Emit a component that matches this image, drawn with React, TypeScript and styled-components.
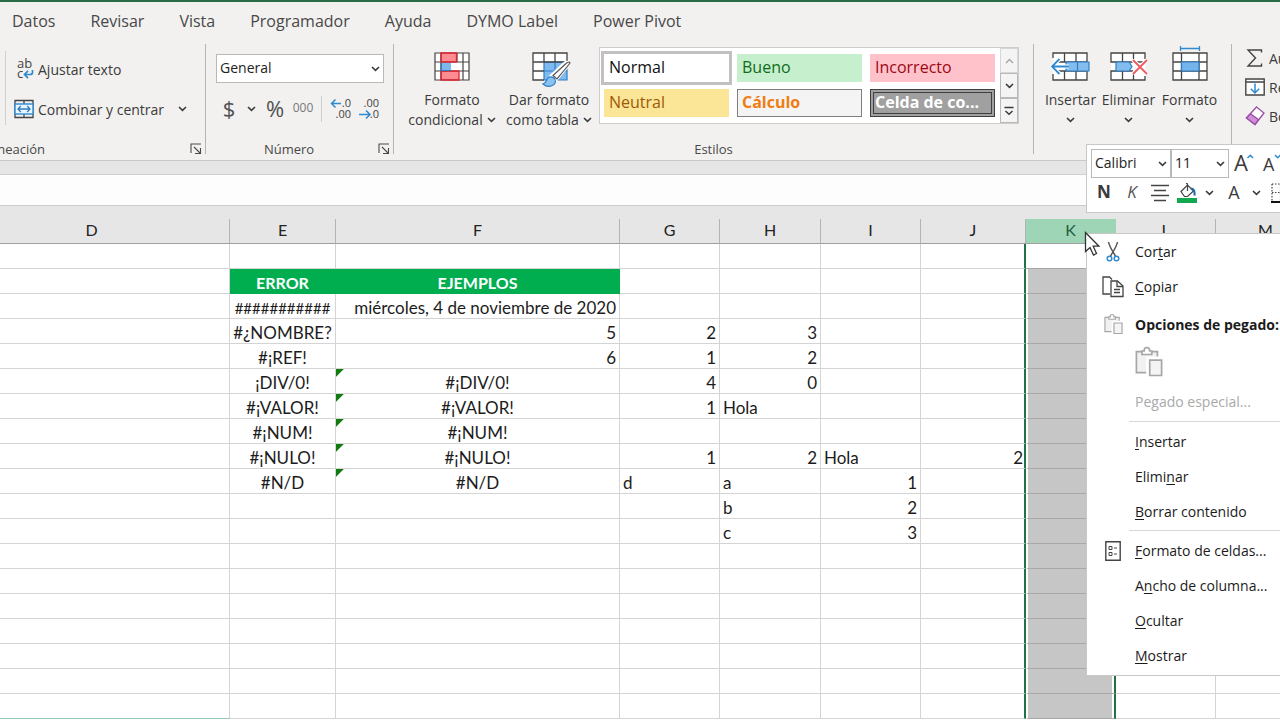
import React from "react";
import styled, { createGlobalStyle, css } from "styled-components";

const ui = `"Open Sans", "Noto Sans", sans-serif`;
const sheetFont = `Lato, "Noto Sans", sans-serif`;

const GlobalStyle = createGlobalStyle`
  *, *::before, *::after { box-sizing: border-box; }
  body { margin: 0; background: #fff; font-family: ${ui}; font-size: 14px; color: #3b3b3b; }
  button, select, input { font: inherit; color: inherit; }
  button { background: none; border: 0; padding: 0; }
`;

const Page = styled.div`
  position: relative;
  min-height: 100vh;
  overflow: hidden;
  background: #fff;
`;

const Tabs = styled.nav`
  display: flex;
  gap: 35px;
  height: 44px;
  padding: 0 0 4px 12px;
  border-top: 2px solid #2b6b45;
  background: #f2f1f0;
`;

const Tab = styled.a`
  line-height: 38px;
  font-size: 16px;
  color: #484848;
  text-decoration: none;
  white-space: nowrap;
`;

const Ribbon = styled.div`
  display: flex;
  height: 117px;
  padding-bottom: 6px;
  border-bottom: 1px solid #c9c9c9;
  background: #f2f1f0;
`;

const Group = styled.section<{ $width?: number }>`
  flex: ${(p) => (p.$width ? `0 0 ${p.$width}px` : "1 0 auto")};
  display: flex;
  flex-direction: column;
  height: 110px;
  border-right: ${(p) => (p.$width ? "1px solid #b5b5b5" : "0")};
`;

const GroupBody = styled.div<{ $pad?: string }>`
  display: flex;
  align-items: flex-start;
  height: 98px;
  padding: ${(p) => p.$pad ?? "0"};
`;

const Caption = styled.div<{ $launcher?: boolean }>`
  position: relative;
  display: flex;
  justify-content: center;
  height: 12px;
  padding-right: ${(p) => (p.$launcher ? 21 : 0)}px;
  font-size: 13px;
  line-height: 14px;
  color: #484848;
`;

const CutCaption = styled(Caption)`
  justify-content: flex-end;
  width: 45px;
`;

const Launcher = styled.button`
  position: absolute;
  right: 3px;
  top: 1px;
  height: 12px;
  line-height: 0;
`;

const CutRow = styled.div`
  position: relative;
`;

const Column = styled.div<{ $gap: number; $top?: number }>`
  display: flex;
  flex-direction: column;
  gap: ${(p) => p.$gap}px;
  padding-top: ${(p) => p.$top ?? 0}px;
`;

const Rule = styled.span<{ $height: number; $margin: string }>`
  width: 1px;
  height: ${(p) => p.$height}px;
  margin: ${(p) => p.$margin};
  background: #cfcfcf;
`;

const RowButton = styled.button<{ $gap?: number }>`
  display: flex;
  align-items: center;
  gap: ${(p) => p.$gap ?? 4}px;
  height: 28px;
  font-size: 14px;
  white-space: nowrap;
`;

const ChevronSpace = styled.span`
  display: flex;
  margin-left: 10px;
`;

const SelectBox = styled.label<{ $width: number; $height: number }>`
  position: relative;
  display: flex;
  align-items: center;
  width: ${(p) => p.$width}px;
  height: ${(p) => p.$height}px;
  border: 1px solid #b9b9b9;
  background: #fff;

  select {
    width: 100%;
    height: 100%;
    padding: 0 0 2px 3px;
    border: 0;
    appearance: none;
    background: transparent;
    color: #222;
    font-size: 14px;
  }

  svg {
    position: absolute;
    right: 3px;
    pointer-events: none;
  }
`;

const NumberRow = styled.div`
  display: flex;
  align-items: center;
  height: 28px;
`;

const Glyph = styled.button<{ $size: number; $width: number; $weight?: number; $italic?: boolean; $color?: string }>`
  width: ${(p) => p.$width}px;
  font-size: ${(p) => p.$size}px;
  line-height: 26px;
  padding-bottom: 2px;
  text-align: center;
  font-weight: ${(p) => p.$weight ?? 400};
  font-style: ${(p) => (p.$italic ? "italic" : "normal")};
  color: ${(p) => p.$color ?? "#3b3b3b"};
`;

const IconButton = styled.button<{ $width: number }>`
  display: flex;
  align-items: center;
  justify-content: center;
  width: ${(p) => p.$width}px;
  height: 28px;
`;

const BigButton = styled.button<{ $width: number }>`
  display: flex;
  flex-direction: column;
  align-items: center;
  width: ${(p) => p.$width}px;
  font-size: 14px;
  line-height: 20px;
  white-space: nowrap;
`;

const BigIcon = styled.span`
  display: flex;
  align-items: flex-end;
  justify-content: center;
  height: 38px;
  margin-bottom: 8px;
`;

const LabelLine = styled.span`
  display: flex;
  align-items: center;
  gap: 4px;
  height: 20px;
`;

const Gallery = styled.div`
  display: flex;
  margin: 3px 0 0 2px;
  height: 77px;
  border: 1px solid #cdcdcd;
  background: #fff;
`;

const Tiles = styled.div`
  display: grid;
  grid-template-columns: repeat(3, 125px);
  grid-auto-rows: 28px;
  gap: 7px 8px;
  padding: 6px 5px 6px 4px;
`;

type TileKind = "normal" | "good" | "bad" | "neutral" | "calc" | "check";

const tileStyles: Record<TileKind, ReturnType<typeof css>> = {
  normal: css`color: #111; background: #fff; box-shadow: 0 0 0 3px #c1c1c1;`,
  good: css`color: #116b17; background: #c6efce;`,
  bad: css`color: #a00612; background: #ffc2cb;`,
  neutral: css`color: #9c5a08; background: #fbe596;`,
  calc: css`color: #f07d12; background: #f4f4f4; border: 1px solid #7f7f7f; font-weight: 700;`,
  check: css`color: #fff; background: #a0a0a0; border: 4px double #3f3f3f; font-weight: 700;`,
};

const Tile = styled.button<{ $kind: TileKind }>`
  display: flex;
  align-items: center;
  padding: 0 0 2px ${(p) => (p.$kind === "check" ? 1 : p.$kind === "calc" ? 4 : 5)}px;
  font-size: 16px;
  line-height: 18px;
  white-space: nowrap;
  ${(p) => tileStyles[p.$kind]}
`;

const GalleryScroll = styled.div`
  display: grid;
  grid-template-rows: 1fr 1fr 1fr;
  width: 18px;
  background: #f4f4f4;

  button {
    display: flex;
    align-items: center;
    justify-content: center;
    border: 1px solid #b9b9b9;
  }
  button:disabled { opacity: 0.5; }
`;

const Band = styled.div`
  height: 14px;
  background: #e6e6e6;
  border-bottom: 1px solid #cfcfcf;
`;

const FormulaInput = styled.input`
  display: block;
  width: 100%;
  height: 30px;
  padding: 0 8px;
  border: 0;
  background: #fdfdfd;
`;

const SheetArea = styled.main`
  padding-top: 13px;
  background: #e6e6e6;
  border-top: 1px solid #cbcbcb;
`;

/* The sheet is scrolled sideways, so column D starts beyond the left edge. */
const Sheet = styled.table`
  width: calc(100% + 46px);
  min-width: 1362px;
  margin-left: -46px;
  table-layout: fixed;
  border-collapse: separate;
  border-spacing: 0;
  background: #fff;
  color: #1c1c1c;
  font-family: ${sheetFont};
  font-size: 17px;
`;

const Head = styled.th<{ $active: boolean }>`
  height: 25px;
  padding: 0 0 2px;
  border-right: 1px solid ${(p) => (p.$active ? "#9fd5b7" : "#b4b4b4")};
  border-bottom: 1px solid #a0a0a0;
  background: ${(p) => (p.$active ? "#9fd5b7" : "#e6e6e6")};
  color: ${(p) => (p.$active ? "#1e5c3c" : "#222")};
  font-size: 16px;
  font-weight: 400;
  line-height: 22px;
`;

type Align = "left" | "center" | "right";
type Zone = "plain" | "title" | "before" | "selected" | "active" | "overflowing";

const zoneStyles: Record<Zone, ReturnType<typeof css>> = {
  plain: css``,
  title: css`background: #00ae50; border-color: #00ae50; color: #fff; font-weight: 700; font-size: 16px;`,
  before: css`border-right: 2px solid #217346; padding-right: 1px;`,
  selected: css`
    background: #c6c6c6;
    border-bottom-color: #a8a8a8;
    border-left: 2px solid #fff;
    border-right: 2px solid #217346;
    box-shadow: inset -2px 0 0 #fff;
  `,
  active: css`border-right: 2px solid #217346; border-bottom-color: #a8a8a8;`,
  overflowing: css`font-size: 15px;`,
};

const Cell = styled.td<{ $align: Align; $zone: Zone; $flag: boolean; $mark: boolean }>`
  height: 25px;
  padding: 4px 3px 0 3px;
  border-right: 1px solid #d4d4d4;
  border-bottom: 1px solid ${(p) => (p.$mark ? "#8fcab0" : "#d4d4d4")};
  line-height: 20px;
  text-align: ${(p) => p.$align};
  white-space: nowrap;
  ${(p) => p.$flag && css`background: linear-gradient(135deg, #107c10 5px, transparent 6px);`}
  ${(p) => zoneStyles[p.$zone]}
`;

const Floating = styled.div<{ $top: number }>`
  position: absolute;
  left: 1086px;
  top: ${(p) => p.$top}px;
  width: 300px;
  border: 1px solid #c8c8c8;
  background: #fff;
`;

const MiniToolbar = styled(Floating)`
  height: 69px;
  padding: 4px 0 0 4px;
`;

const MiniRow = styled.div<{ $height: number }>`
  display: flex;
  align-items: center;
  height: ${(p) => p.$height}px;
`;

const Menu = styled(Floating)`
  padding: 0 0 2px;
  color: #1b1b1b;
`;

const MenuItem = styled.button<{ $height?: number; $bold?: boolean }>`
  display: grid;
  grid-template-columns: 48px 1fr;
  align-items: center;
  width: 100%;
  height: ${(p) => p.$height ?? 35}px;
  font-size: 14px;
  font-weight: ${(p) => (p.$bold ? 700 : 400)};
  text-align: left;
  white-space: nowrap;

  &:disabled { color: #a9a9a9; }
  > span:first-child { display: flex; justify-content: center; padding-left: 4px; }
  u { text-underline-offset: 2px; }
`;

const MenuRule = styled.hr`
  height: 1px;
  margin: 1px 0 2px 42px;
  border: 0;
  background: #d6d6d6;
`;

const Pointer = styled.svg`
  position: absolute;
  left: 1084px;
  top: 231px;
`;

const Chevron = ({ color = "#3b3b3b" }: { color?: string }) => (
  <svg width="9" height="6" viewBox="0 0 9 6" fill="none" stroke={color} strokeWidth="1.6">
    <path d="M1 1l3.5 3.3L8 1" />
  </svg>
);

const LauncherIcon = () => (
  <svg width="12" height="12" viewBox="0 0 12 12" fill="none" stroke="#4a4a4a" strokeWidth="1.1">
    <path d="M1 10V1h10M4 4l6 6M10.500 5v5.500H5" />
  </svg>
);

const WrapIcon = () => (
  <svg width="20" height="22" viewBox="0 0 20 22" fontFamily="Open Sans" fontSize="13" fill="#444">
    <text x="3" y="10">ab</text>
    <text x="3" y="20">c</text>
    <path d="M18.500 12v2.500q0 2-2.500 2h-5M14 12.800L10.500 16.500l3.500 3.700" fill="none" stroke="#2f8ad0" strokeWidth="1.700" />
  </svg>
);

const MergeIcon = () => (
  <svg width="20" height="20" viewBox="0 0 20 20" fill="none">
    <path d="M1 1.500h18v17H1zM10 1v4M10 15v4" stroke="#444" strokeWidth="1.300" />
    <rect x="1" y="5" width="18" height="10" fill="#eaf5fd" stroke="#2f8ad0" strokeWidth="1.400" />
    <path d="M4 10h12M6.800 7L4 10l2.800 3M13.200 7l2.800 3-2.800 3" stroke="#2f7fc4" strokeWidth="1.300" />
  </svg>
);

const DecimalIcon = ({ more }: { more: boolean }) => (
  <svg width="22" height="22" viewBox="0 0 22 22" fontFamily="Open Sans" fontSize="11" fill="#444">
    <text x="21" y="9" textAnchor="end">{more ? ".0" : ".00"}</text>
    <text x="21" y="20" textAnchor="end">{more ? ".00" : ".0"}</text>
    {more ? (
      <path d="M11 5.500H2M5.500 1.500l-4 4 4 4" fill="none" stroke="#2f8ad0" strokeWidth="1.500" />
    ) : (
      <path d="M1 16.500h10M8 12.500l4 4-4 4" fill="none" stroke="#2f8ad0" strokeWidth="1.500" />
    )}
  </svg>
);

const ConditionalIcon = () => (
  <svg width="36" height="30" viewBox="0 0 36 30">
    <path d="M1 1h34v27H1z" fill="#fff" />
    <path d="M7 1h15v9H7zM7 19h18v9H7z" fill="#ff8c93" />
    <path d="M7 10.500h10v8H7z" fill="#7db8ec" />
    <path d="M1 1h34v27H1zM1 10h34M1 19h34M7 1v27M29 1v27M23 1v9" fill="none" stroke="#444" strokeWidth="1.200" />
    <path d="M7 1h15.500v9H7zM25 19v9H7v-9z" fill="none" stroke="#e2252f" strokeWidth="1.300" />
    <path d="M7 10.500v8h10" fill="none" stroke="#2f7fc4" strokeWidth="1.200" />
  </svg>
);

const TableFormatIcon = () => (
  <svg width="36" height="30" viewBox="0 0 36 30" overflow="visible">
    <path d="M2 1h34v27H2z" fill="#fff" />
    <path d="M13 10h23v18H13z" fill="#7fbaf0" />
    <path d="M13 19h23M24 10v18M13 10v18h23V10z" fill="none" stroke="#2f7fc4" strokeWidth="1.200" />
    <path d="M36 10V1H2v27h11M2 10h34M2 19h11M13 1v9M24 1v9" fill="none" stroke="#444" strokeWidth="1.300" />
    <path d="M37 10c2-.5 2 1 1 2.500L25 28l-5-4L33 11.500c1-1 2.500-1.500 4-1.500z" fill="#fff" stroke="#fff" strokeWidth="3" />
    <path d="M38 10c1.500 0 .8 1.500 0 2.500L26 27l-4-3.500L34.500 12c1-1 2.300-2 3.500-2z" fill="#fff" stroke="#555" strokeWidth="1.200" />
    <path d="M12 32c3-.5 3-3 4.500-5.500 1.500-2.300 5-2.300 7 0 2 2.500 1 5.500-2 7-3 1.300-7 .8-9.500-1.500z" fill="#8cc2ef" stroke="#2f7fc4" strokeWidth="1.200" />
  </svg>
);

const InsertIcon = () => (
  <svg width="42" height="30" viewBox="0 0 42 30">
    <path d="M3 1h34v27H3z" fill="#fff" />
    <path d="M3 6V1h34v9M3 22v6h34v-9M14.500 1v9M26 1v9M14.500 19v9M26 19v9M8 10h29M8 19h29" fill="none" stroke="#444" strokeWidth="1.300" />
    <path d="M16 10h23v9H16z" fill="#83bdf0" stroke="#2f7fc4" strokeWidth="1.200" />
    <path d="M27.500 10v9" stroke="#2f7fc4" strokeWidth="1.200" />
    <path d="M19 14.500H2M9.500 7L2 14.500 9.500 22" fill="none" stroke="#fff" strokeWidth="4" />
    <path d="M19 14.500H2M9.500 7L2 14.500 9.500 22" fill="none" stroke="#2f8ad0" strokeWidth="1.800" />
  </svg>
);

const DeleteIcon = () => (
  <svg width="40" height="30" viewBox="0 0 40 30">
    <path d="M2 1h34v27H2z" fill="#fff" />
    <path d="M36 7V1H2v9h32M36 24v4H2v-9h22M13.500 1v9M24.500 1v6M13.500 19v9M24.500 22v6" fill="none" stroke="#444" strokeWidth="1.300" />
    <path d="M7 10h13l3 4.500-3 4.500H7z" fill="#83bdf0" stroke="#2f7fc4" strokeWidth="1.200" />
    <path d="M24 8l14 14M38 8L24 22" stroke="#fff" strokeWidth="4" />
    <path d="M24 8l14 14M38 8L24 22" stroke="#f05a5f" strokeWidth="1.800" />
  </svg>
);

const FormatIcon = () => (
  <svg width="38" height="36" viewBox="0 0 38 36">
    <path d="M2 7h34v27H2z" fill="#fff" />
    <path d="M2 7h34v27H2zM2 16h34M2 25h34M10.500 7v27M28 7v27" fill="none" stroke="#444" strokeWidth="1.300" />
    <path d="M10.500 16H28v9H10.500z" fill="#74b4ec" stroke="#2f7fc4" strokeWidth="1.200" />
    <path d="M9.500 2.500h19M9.500 0v5M28.500 0v5" stroke="#2f8ad0" strokeWidth="1.300" />
  </svg>
);

const SumIcon = () => (
  <svg width="20" height="20" viewBox="0 0 20 20" fill="none" stroke="#444" strokeWidth="1.400">
    <path d="M16.500 4.500V2H3l7.500 8L3 18h13.500v-2.500" />
  </svg>
);

const FillDownIcon = () => (
  <svg width="20" height="20" viewBox="0 0 20 20" fill="none" stroke="#444" strokeWidth="1.400">
    <path d="M.8 2h18.400v16H.8zM.8 5h18.400" fill="#fff" />
    <path d="M10 6.500V16M5.800 11.800L10 16l4.200-4.200" stroke="#2f8ad0" strokeWidth="1.500" />
  </svg>
);

const EraserIcon = () => (
  <svg width="20" height="20" viewBox="0 0 20 20" strokeWidth="1.300">
    <path d="M11.500 1l7.500 6-9 11.500L1.500 12z" fill="#fff" stroke="#9a4fa5" />
    <path d="M5.500 7.700l8 6L10 18.500 1.500 12z" fill="#d08fd8" stroke="#9a4fa5" />
  </svg>
);

const FontSizeIcon = ({ grow }: { grow: boolean }) => (
  <svg width="22" height="22" viewBox="0 0 22 22" fontFamily="Open Sans" fill="#3b3b3b">
    <text x="1" y="18" fontSize={grow ? 22 : 18}>A</text>
    <path d={grow ? "M14.500 5l2.800-2.800L20 5" : "M13 2l2.800 2.800L18.500 2"} fill="none" stroke="#2f8ad0" strokeWidth="1.500" />
  </svg>
);

const AlignIcon = () => (
  <svg width="18" height="18" viewBox="0 0 18 18" stroke="#444" strokeWidth="1.300">
    <path d="M0 1.500h18M3 6.500h12M0 11.500h18M3 16.500h12" />
  </svg>
);

const BucketIcon = () => (
  <svg width="20" height="20" viewBox="0 0 20 20" fill="none">
    <path d="M4 8.500L10.500 2l6 6-6 5.500H7.500z" fill="#fff" stroke="#444" strokeWidth="1.200" />
    <path d="M10.500 8V1.500Q10.500 0 9 .8" stroke="#444" strokeWidth="1.200" />
    <path d="M14 5.500c3 .5 4 3 3.500 7" stroke="#2068a8" strokeWidth="2.200" />
    <path d="M0 15h20v5H0z" fill="#12a84f" />
  </svg>
);

const BordersIcon = () => (
  <svg width="19" height="20" viewBox="0 0 19 20" fill="none" stroke="#444" strokeWidth="1.200">
    <path d="M1 1h17v17M1 1v17M9.500 1v17M1 9.500h17" strokeDasharray="1.500 1.500" />
    <path d="M0 19h19" stroke="#111" strokeWidth="2" />
  </svg>
);

const ScissorsIcon = () => (
  <svg width="14" height="22" viewBox="0 0 14 22" fill="none" strokeWidth="1.500">
    <path d="M2.500 1c.5 3 2.500 7 7 14M11.500 1c-.5 3-2.500 7-7 14" stroke="#555" />
    <circle cx="3.500" cy="17.500" r="2.300" stroke="#2f8ad0" />
    <circle cx="10.500" cy="17.500" r="2.300" stroke="#2f8ad0" />
  </svg>
);

const CopyIcon = () => (
  <svg width="22" height="22" viewBox="0 0 22 22" fill="none" stroke="#444" strokeWidth="1.300">
    <path d="M8 18H1V1h6.500L10 3.500" />
    <path d="M9 5h6.500L21 10v10.500H9z" fill="#fff" />
    <path d="M15 5v5.500h6M12 13.500h6M12 16.500h6" />
  </svg>
);

const PasteIcon = ({ size }: { size: number }) => (
  <svg width={size} height={size + 3} viewBox="0 0 20 22" fill="none" stroke="#a6a6a6" strokeWidth="1.200">
    <path d="M1 4h15v15H1z" fill="#f1f1f1" />
    <path d="M5 6V3.500h1.500Q6.500 1 8.500 1t2 2.500H12V6z" fill="#fff" />
    <path d="M9.500 9h10v12h-10z" fill="#f4f4f4" stroke="#fff" strokeWidth="3" />
    <path d="M10.500 10h8.500v11h-8.500z" fill="#f4f4f4" />
  </svg>
);

const FormatCellsIcon = () => (
  <svg width="16" height="20" viewBox="0 0 16 20" fill="none" stroke="#444">
    <path d="M.8.8h14.400v18.400H.8z" strokeWidth="1.400" />
    <path d="M4 5.500h3v3H4zM4 11.500h3v3H4zM9 7h3M9 13h3" />
  </svg>
);

const tabs = ["Datos", "Revisar", "Vista", "Programador", "Ayuda", "DYMO Label", "Power Pivot"];

const tiles: [TileKind, string][] = [
  ["normal", "Normal"],
  ["good", "Bueno"],
  ["bad", "Incorrecto"],
  ["neutral", "Neutral"],
  ["calc", "Cálculo"],
  ["check", "Celda de co..."],
];

const columns: [string, number?][] = [
  ["D", 276], ["E", 106], ["F", 284], ["G", 100], ["H", 101],
  ["I", 100], ["J", 105], ["K", 90], ["L", 100], ["M"],
];

const rowCount = 19;

const values: Record<string, string> = {
  E2: "ERROR", F2: "EJEMPLOS",
  E3: "###########", F3: "miércoles, 4 de noviembre de 2020",
  E4: "#¿NOMBRE?", F4: "5", G4: "2", H4: "3",
  E5: "#¡REF!", F5: "6", G5: "1", H5: "2",
  E6: "¡DIV/0!", F6: "#¡DIV/0!", G6: "4", H6: "0",
  E7: "#¡VALOR!", F7: "#¡VALOR!", G7: "1", H7: "Hola",
  E8: "#¡NUM!", F8: "#¡NUM!",
  E9: "#¡NULO!", F9: "#¡NULO!", G9: "1", H9: "2", I9: "Hola", J9: "2",
  E10: "#N/D", F10: "#N/D", G10: "d", H10: "a", I10: "1",
  H11: "b", I11: "2",
  H12: "c", I12: "3",
};

const alignOf = (col: string, value = ""): Align => {
  if (col === "E" || value.startsWith("#") || value === "EJEMPLOS") return "center";
  return /\d/.test(value) ? "right" : "left";
};

const zoneOf = (col: string, row: number): Zone => {
  if (col === "K") return row === 1 ? "active" : "selected";
  if (col === "J") return "before";
  if (col === "E" && row === 3) return "overflowing";
  return row === 2 && (col === "E" || col === "F") ? "title" : "plain";
};

const Grid = () => (
  <Sheet>
    <colgroup>
      {columns.map(([name, width]) => <col key={name} width={width} />)}
    </colgroup>
    <thead>
      <tr>
        {columns.map(([name]) => <Head key={name} scope="col" $active={name === "K"}>{name}</Head>)}
      </tr>
    </thead>
    <tbody>
      {Array.from({ length: rowCount }, (_, i) => i + 1).map((row) => (
        <tr key={row}>
          {columns.map(([name]) => {
            const value = values[name + row];
            return (
              <Cell
                key={name}
                $align={alignOf(name, value)}
                $zone={zoneOf(name, row)}
                $flag={name === "F" && row >= 6 && row <= 10}
                $mark={name === "D" && row === rowCount}
              >
                {value}
              </Cell>
            );
          })}
        </tr>
      ))}
    </tbody>
  </Sheet>
);

export default function App() {
  return (
    <Page>
      <GlobalStyle />
      <Tabs>
        {tabs.map((name) => <Tab key={name} href="#">{name}</Tab>)}
      </Tabs>

      <Ribbon>
        <Group $width={206}>
          <GroupBody $pad="7px 0 0 5px">
            <Rule $height={74} $margin="0 8px 0 0" />
            <Column $gap={12} $top={4}>
              <RowButton><WrapIcon />Ajustar texto</RowButton>
              <RowButton>
                <MergeIcon />Combinar y centrar
                <ChevronSpace><Chevron /></ChevronSpace>
              </RowButton>
            </Column>
          </GroupBody>
          <CutRow>
            <CutCaption>Alineación</CutCaption>
            <Launcher aria-label="Configuración de alineación"><LauncherIcon /></Launcher>
          </CutRow>
        </Group>

        <Group $width={188}>
          <GroupBody $pad="10px 0 0 10px">
            <Column $gap={12}>
              <SelectBox $width={168} $height={29}>
                <select aria-label="Formato de número"><option>General</option></select>
                <Chevron />
              </SelectBox>
              <NumberRow>
                <Glyph $size={22} $width={26} $color="#505050">$</Glyph>
                <IconButton $width={18} aria-label="Más monedas"><Chevron /></IconButton>
                <Glyph $size={22} $width={30} $color="#505050">%</Glyph>
                <Glyph $size={12} $width={26} $color="#777">000</Glyph>
                <Rule $height={26} $margin="0 4px 0 5px" />
                <IconButton $width={30} aria-label="Aumentar decimales"><DecimalIcon more /></IconButton>
                <IconButton $width={26} aria-label="Disminuir decimales"><DecimalIcon more={false} /></IconButton>
              </NumberRow>
            </Column>
          </GroupBody>
          <Caption $launcher>
            <span>Número</span>
            <Launcher aria-label="Configuración de número"><LauncherIcon /></Launcher>
          </Caption>
        </Group>

        <Group $width={640}>
          <GroupBody $pad="0 0 0 9px">
            <BigButton $width={98}>
              <BigIcon><ConditionalIcon /></BigIcon>
              <LabelLine>Formato</LabelLine>
              <LabelLine>condicional <Chevron /></LabelLine>
            </BigButton>
            <BigButton $width={96}>
              <BigIcon><TableFormatIcon /></BigIcon>
              <LabelLine>Dar formato</LabelLine>
              <LabelLine>como tabla <Chevron /></LabelLine>
            </BigButton>
            <Gallery>
              <Tiles>
                {tiles.map(([kind, name]) => <Tile key={kind} $kind={kind}>{name}</Tile>)}
              </Tiles>
              <GalleryScroll>
                <button disabled aria-label="Fila anterior">
                  <svg width="9" height="6" viewBox="0 0 9 6" fill="none" stroke="#555" strokeWidth="1.300"><path d="M1 5l3.500-3.500L8 5" /></svg>
                </button>
                <button aria-label="Fila siguiente"><Chevron /></button>
                <button aria-label="Más estilos">
                  <svg width="10" height="10" viewBox="0 0 10 10" fill="none" stroke="#3b3b3b" strokeWidth="1.500"><path d="M.5 1.500h9M1.500 5L5 8.300 8.500 5" /></svg>
                </button>
              </GalleryScroll>
            </Gallery>
          </GroupBody>
          <Caption>Estilos</Caption>
        </Group>

        <Group $width={198}>
          <GroupBody $pad="0 0 0 8px">
            <BigButton $width={57}>
              <BigIcon><InsertIcon /></BigIcon>
              <LabelLine>Insertar</LabelLine>
              <LabelLine><Chevron /></LabelLine>
            </BigButton>
            <BigButton $width={59}>
              <BigIcon><DeleteIcon /></BigIcon>
              <LabelLine>Eliminar</LabelLine>
              <LabelLine><Chevron /></LabelLine>
            </BigButton>
            <BigButton $width={63}>
              <BigIcon><FormatIcon /></BigIcon>
              <LabelLine>Formato</LabelLine>
              <LabelLine><Chevron /></LabelLine>
            </BigButton>
          </GroupBody>
        </Group>

        <Group>
          <GroupBody $pad="0 0 0 13px">
            <Column $gap={1}>
              <RowButton><SumIcon />Autosuma</RowButton>
              <RowButton><FillDownIcon />Rellenar</RowButton>
              <RowButton><EraserIcon />Borrar</RowButton>
            </Column>
          </GroupBody>
        </Group>
      </Ribbon>

      <Band />
      <FormulaInput aria-label="Barra de fórmulas" />

      <SheetArea>
        <Grid />
      </SheetArea>

      <MiniToolbar $top={144}>
        <MiniRow $height={29}>
          <SelectBox $width={80} $height={29}>
            <select aria-label="Fuente"><option>Calibri</option></select>
            <Chevron />
          </SelectBox>
          <SelectBox $width={58} $height={29}>
            <select aria-label="Tamaño de fuente"><option>11</option></select>
            <Chevron />
          </SelectBox>
          <IconButton $width={30} aria-label="Aumentar tamaño"><FontSizeIcon grow /></IconButton>
          <IconButton $width={28} aria-label="Disminuir tamaño"><FontSizeIcon grow={false} /></IconButton>
        </MiniRow>
        <MiniRow $height={30}>
          <Glyph $size={17} $width={26} $weight={700}>N</Glyph>
          <Glyph $size={17} $width={30} $italic $color="#555">K</Glyph>
          <IconButton $width={26} aria-label="Centrar"><AlignIcon /></IconButton>
          <IconButton $width={28} aria-label="Color de relleno"><BucketIcon /></IconButton>
          <IconButton $width={16} aria-label="Más colores de relleno"><Chevron /></IconButton>
          <Glyph $size={18} $width={34}>A</Glyph>
          <IconButton $width={10} aria-label="Más colores de fuente"><Chevron /></IconButton>
          <IconButton $width={38} aria-label="Bordes"><BordersIcon /></IconButton>
        </MiniRow>
      </MiniToolbar>

      <Menu $top={233} role="menu">
        <MenuItem role="menuitem"><span><ScissorsIcon /></span><span>Cor<u>t</u>ar</span></MenuItem>
        <MenuItem role="menuitem"><span><CopyIcon /></span><span><u>C</u>opiar</span></MenuItem>
        <MenuItem role="menuitem" $height={40} $bold><span><PasteIcon size={19} /></span><span>Opciones de pegado:</span></MenuItem>
        <MenuItem role="menuitem" $height={38} disabled aria-label="Pegar"><span /><span><PasteIcon size={28} /></span></MenuItem>
        <MenuItem role="menuitem" $height={38} disabled><span /><span>Pe<u>g</u>ado especial...</span></MenuItem>
        <MenuRule />
        <MenuItem role="menuitem"><span /><span><u>I</u>nsertar</span></MenuItem>
        <MenuItem role="menuitem"><span /><span>Elimi<u>n</u>ar</span></MenuItem>
        <MenuItem role="menuitem"><span /><span><u>B</u>orrar contenido</span></MenuItem>
        <MenuRule />
        <MenuItem role="menuitem"><span><FormatCellsIcon /></span><span><u>F</u>ormato de celdas...</span></MenuItem>
        <MenuItem role="menuitem"><span /><span>A<u>n</u>cho de columna...</span></MenuItem>
        <MenuItem role="menuitem"><span /><span><u>O</u>cultar</span></MenuItem>
        <MenuItem role="menuitem"><span /><span><u>M</u>ostrar</span></MenuItem>
      </Menu>

      <Pointer width="16" height="26" viewBox="0 0 16 26">
        <path d="M1.500 1.500v19l4.500-4 3.500 7.500 3-1.500-3.300-7.300h5.800z" fill="#fff" stroke="#333" strokeWidth="1.300" />
      </Pointer>
    </Page>
  );
}
